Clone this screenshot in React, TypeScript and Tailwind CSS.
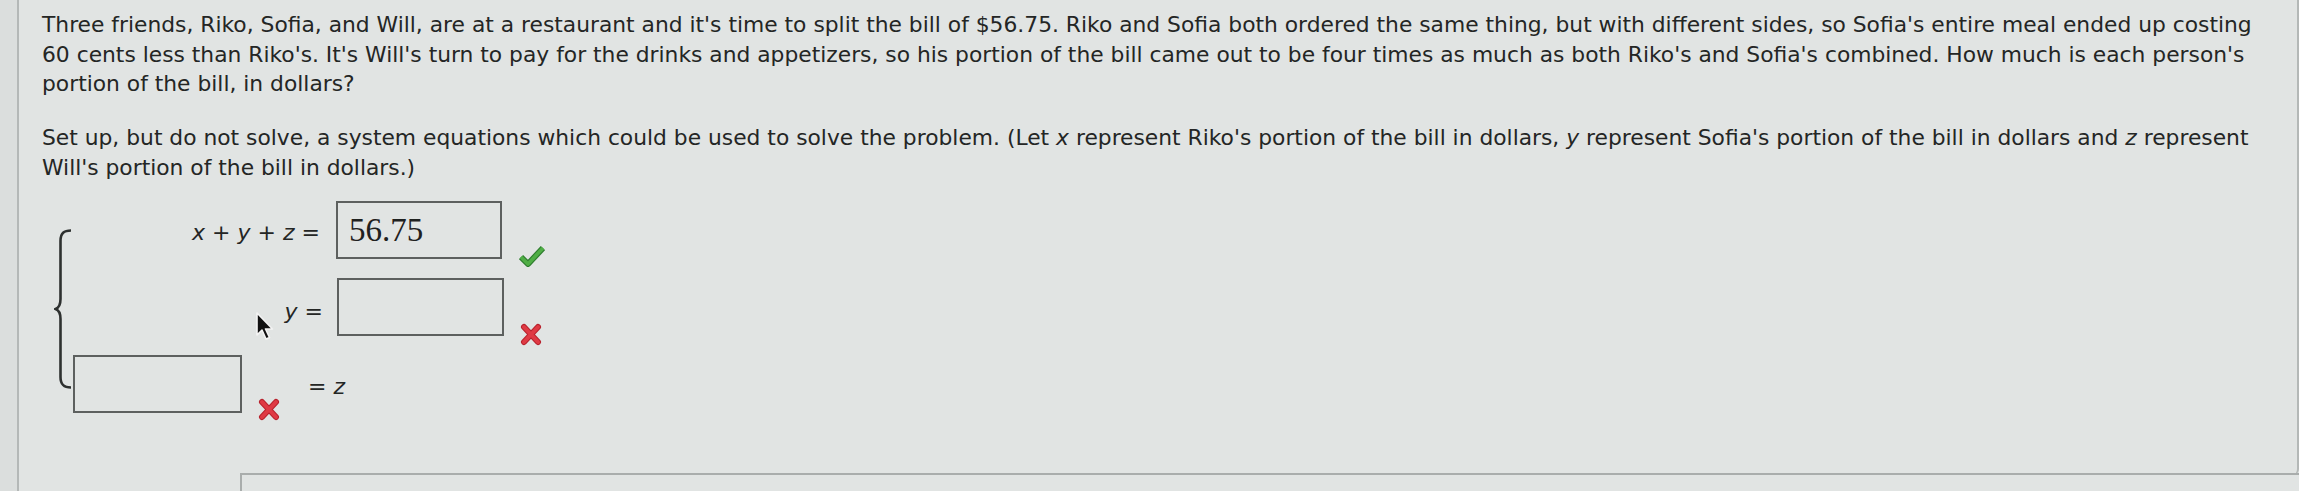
import React from "react";

function Brace() {
  return (
    <svg width="18" height="160" viewBox="0 0 18 160" className="shrink-0">
      <path
        d="M17 1.5 C10 1.5 6.5 4 6.5 12 L6.5 70 C6.5 76 4.5 79 1.5 80 C4.5 81 6.5 84 6.5 90 L6.5 148 C6.5 156 10 158.5 17 158.5"
        fill="none"
        stroke="#2e3130"
        strokeWidth="2.6"
      />
    </svg>
  );
}

function Check() {
  return (
    <svg width="26" height="22" viewBox="0 0 26 22">
      <path d="M2 12 L9 19 L24 3" fill="none" stroke="#2f7d2f" strokeWidth="6" strokeLinejoin="round" />
      <path d="M2 12 L9 19 L24 3" fill="none" stroke="#4fae45" strokeWidth="3.6" strokeLinejoin="round" />
    </svg>
  );
}

function Cross() {
  return (
    <svg width="22" height="23" viewBox="0 0 22 23">
      <path d="M4 4 L18 19 M18 4 L4 19" fill="none" stroke="#b8222d" strokeWidth="6" strokeLinecap="round" />
      <path d="M4 4 L18 19 M18 4 L4 19" fill="none" stroke="#df3a44" strokeWidth="4" strokeLinecap="round" />
    </svg>
  );
}

function Cursor() {
  return (
    <svg width="20" height="30" viewBox="0 0 20 30">
      <path
        d="M2 1 L2 23 L7 18 L11 27 L14.5 25.5 L10.5 17 L17.5 17 Z"
        fill="#111"
        stroke="#f4f4f4"
        strokeWidth="1.6"
        strokeLinejoin="round"
      />
    </svg>
  );
}

const Box = ({ w, children }: { w: string; children?: React.ReactNode }) => (
  <div className={`${w} h-[58px] border-2 border-[#5d605f] flex items-center pl-[11px] shrink-0`}>
    {children}
  </div>
);

export default function App() {
  return (
    <div className="relative w-[2299px] h-[491px] overflow-hidden bg-[#e1e4e3] text-[#242625] font-['DejaVu_Sans',sans-serif]">
      <div className="flex h-[475px]">
        <div className="w-[17px] shrink-0 bg-[#dbdedd]" />
        <div className="flex-1 border-l-2 border-r-2 border-[#b4b8b7] rounded-br-[6px] pl-[23px] pt-[10px]">
          <div className="text-[21.8px] leading-[29.5px] whitespace-nowrap">
            <div>
              Three friends, Riko, Sofia, and Will, are at a restaurant and it's time to split the bill of $56.75. Riko and Sofia both ordered the same thing, but with different sides, so Sofia's entire meal ended up costing
            </div>
            <div>
              60 cents less than Riko's. It's Will's turn to pay for the drinks and appetizers, so his portion of the bill came out to be four times as much as both Riko's and Sofia's combined. How much is each person's
            </div>
            <div>portion of the bill, in dollars?</div>
          </div>
          <div className="mt-[24.5px] text-[21.8px] leading-[29.5px] whitespace-nowrap">
            <div>
              Set up, but do not solve, a system equations which could be used to solve the problem. (Let <i>x</i> represent Riko's portion of the bill in dollars, <i>y</i> represent Sofia's portion of the bill in dollars and <i>z</i> represent
            </div>
            <div>Will's portion of the bill in dollars.)</div>
          </div>

          <div className="mt-[19px] ml-[12px] flex text-[22px]">
            <div className="mt-[28px]">
              <Brace />
            </div>
            <div className="ml-[1px] flex flex-col gap-[19px]">
              <div className="flex items-center">
                <div className="w-[263px] flex justify-end pr-[16px] pt-[6px] leading-none">
                  <span>
                    <i>x</i> + <i>y</i> + <i>z</i> =
                  </span>
                </div>
                <Box w="w-[166px]">
                  <span className="font-['Liberation_Serif',serif] text-[33px] text-[#1f2120] leading-none">56.75</span>
                </Box>
                <div className="self-end mb-[-8px] ml-[17px]">
                  <Check />
                </div>
              </div>
              <div className="flex items-center">
                <div className="w-[264px] flex justify-end pr-[14px] pt-[9px] leading-none">
                  <span>
                    <i>y</i> =
                  </span>
                </div>
                <Box w="w-[167px]" />
                <div className="self-end mb-[-10px] ml-[16px]">
                  <Cross />
                </div>
              </div>
              <div className="flex items-center">
                <Box w="w-[169px]" />
                <div className="self-end mb-[-8px] ml-[16px]">
                  <Cross />
                </div>
                <div className="ml-[28px] pt-[5px] leading-none">
                  = <i>z</i>
                </div>
              </div>
            </div>
          </div>
        </div>
      </div>
      <div className="flex h-[16px]">
        <div className="w-[17px] shrink-0 bg-[#dbdedd]" />
        <div className="w-[223px] shrink-0 border-l-2 border-[#b4b8b7]" />
        <div className="flex-1 -mt-[2px] border-t-2 border-l-2 border-[#a9adac]" />
      </div>
      <div className="absolute left-[255px] top-[312px]">
        <Cursor />
      </div>
    </div>
  );
}
